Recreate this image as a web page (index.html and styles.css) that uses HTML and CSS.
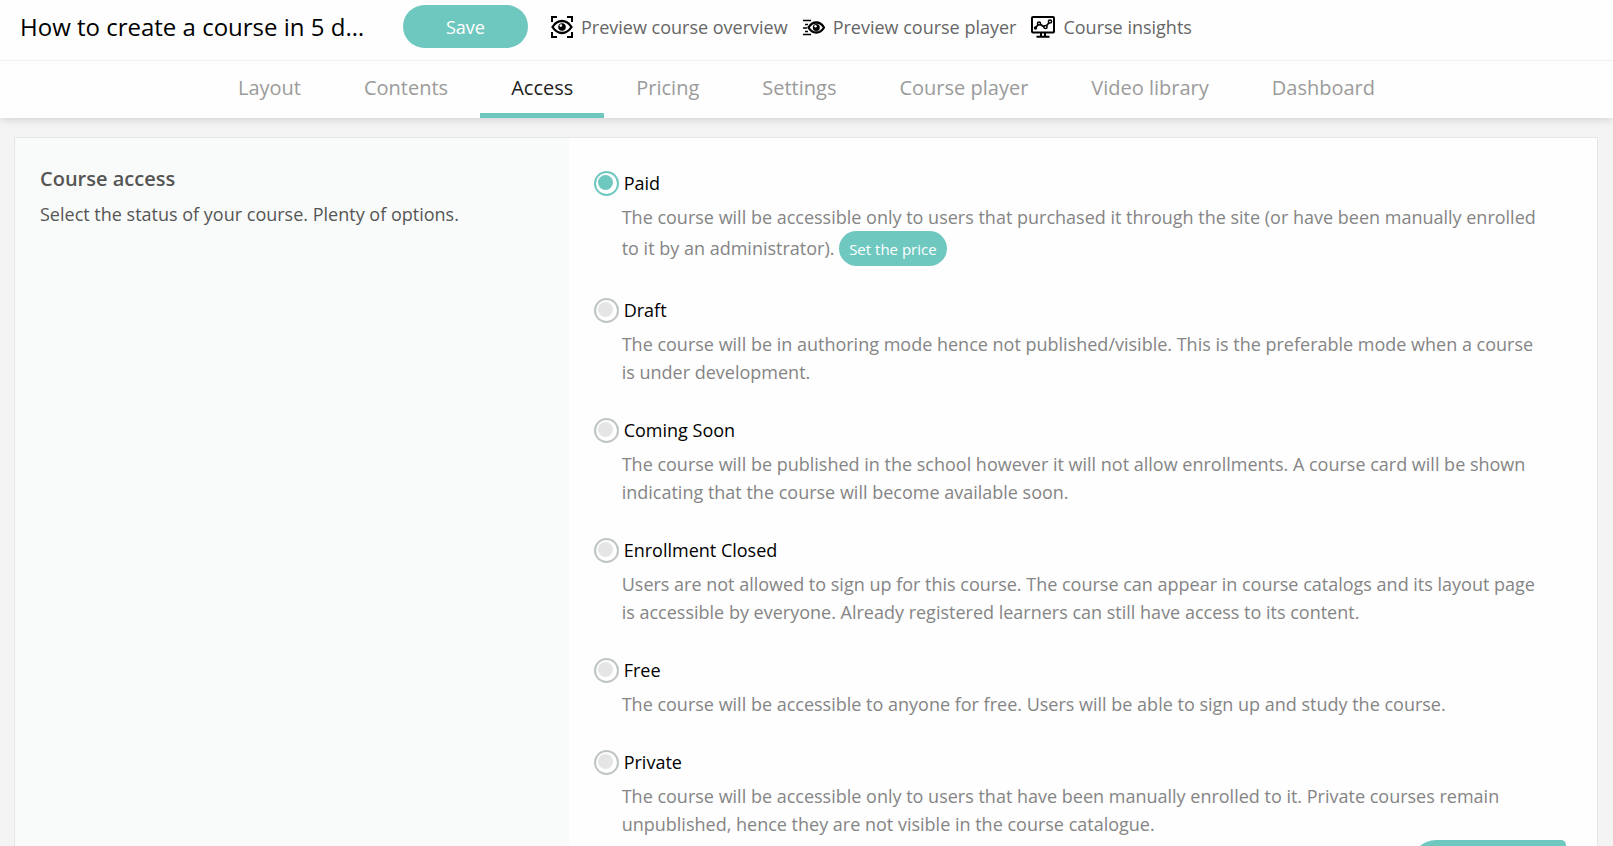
FILE: index.html
```html
<!DOCTYPE html>
<html lang="en">
<head>
    <meta charset="UTF-8">
    <meta name="viewport" content="width=device-width, initial-scale=1.0">
    <title>Course access</title>
    <link rel="stylesheet" href="styles.css">
</head>
<body>
    <header class="header">
        <div class="topbar">
            <h1 class="course-title">How to create a course in 5 days</h1>
            <button type="button" class="btn btn-save">Save</button>
            <div class="top-links">
                <a href="#" class="top-link">
                    <svg class="icon" width="22" height="22" viewBox="0 0 22 22" fill="none" stroke="#000" stroke-width="2">
                        <path d="M1 6V1h5M16 1h5v5M21 16v5h-5M6 21H1v-5"/>
                        <path d="M1.500 11C4 7 7.200 5 11 5s7 2 9.500 6c-2.500 4-5.700 6-9.500 6s-7-2-9.500-6z" stroke-width="2.300"/>
                        <circle cx="11" cy="11" r="3.800" fill="#000" stroke="none"/>
                        <circle cx="9.800" cy="9.600" r="1.300" fill="#fff" stroke="none"/>
                    </svg>
                    <span>Preview course overview</span>
                </a>
                <a href="#" class="top-link">
                    <svg class="icon" width="22" height="22" viewBox="0 0 22 22" fill="none" stroke="#000" stroke-width="2">
                        <path d="M0 4.500h8M2 8.500h3M0 12h4M2 15.500h3M0 18.500h8" stroke-width="1.500"/>
                        <path d="M5.500 11.500C7.500 8 10 6.500 13.300 6.500S19 8 21 11.500C19 15 16.600 16.500 13.300 16.500S7.500 15 5.500 11.500z" stroke-width="2.300"/>
                        <circle cx="13.300" cy="11.500" r="3.500" fill="#000" stroke="none"/>
                        <circle cx="12.500" cy="10.300" r="1.200" fill="#fff" stroke="none"/>
                    </svg>
                    <span>Preview course player</span>
                </a>
                <a href="#" class="top-link">
                    <svg class="icon" width="24" height="22" viewBox="0 0 24 22" fill="none" stroke="#000" stroke-width="2">
                        <rect x="1" y="1" width="22" height="15.500" rx="1"/>
                        <path d="M4 12.500l4-5 6 4 5-6" stroke-width="1.700"/>
                        <circle cx="4.500" cy="12" r="1.700" fill="#000" stroke="none"/>
                        <circle cx="8" cy="7.500" r="1.500" fill="#fff" stroke-width="1.500"/>
                        <circle cx="14.500" cy="11" r="1.600" fill="#fff" stroke-width="1.500"/>
                        <circle cx="19" cy="5.500" r="1.600" fill="#fff" stroke-width="1.500"/>
                        <path d="M10 17v3M14 17v3M5.500 20.800h13"/>
                    </svg>
                    <span>Course insights</span>
                </a>
            </div>
        </div>
        <nav class="tabs">
            <a href="#" class="tab">Layout</a>
            <a href="#" class="tab">Contents</a>
            <a href="#" class="tab active">Access</a>
            <a href="#" class="tab">Pricing</a>
            <a href="#" class="tab">Settings</a>
            <a href="#" class="tab">Course player</a>
            <a href="#" class="tab">Video library</a>
            <a href="#" class="tab">Dashboard</a>
        </nav>
    </header>

    <main class="card">
        <section class="card-info">
            <h2>Course access</h2>
            <p>Select the status of your course. Plenty of options.</p>
        </section>
        <form class="options">
            <div class="option">
                <input type="radio" name="access" id="paid" checked>
                <label for="paid">Paid</label>
                <p>The course will be accessible only to users that purchased it through the site (or have been manually enrolled to it by an administrator). <button type="button" class="btn btn-price">Set the price</button></p>
            </div>
            <div class="option">
                <input type="radio" name="access" id="draft">
                <label for="draft">Draft</label>
                <p>The course will be in authoring mode hence not published/visible. This is the preferable mode when a course is under development.</p>
            </div>
            <div class="option">
                <input type="radio" name="access" id="soon">
                <label for="soon">Coming Soon</label>
                <p>The course will be published in the school however it will not allow enrollments. A course card will be shown indicating that the course will become available soon.</p>
            </div>
            <div class="option">
                <input type="radio" name="access" id="closed">
                <label for="closed">Enrollment Closed</label>
                <p>Users are not allowed to sign up for this course. The course can appear in course catalogs and its layout page is accessible by everyone. Already registered learners can still have access to its content.</p>
            </div>
            <div class="option">
                <input type="radio" name="access" id="free">
                <label for="free">Free</label>
                <p>The course will be accessible to anyone for free. Users will be able to sign up and study the course.</p>
            </div>
            <div class="option">
                <input type="radio" name="access" id="private">
                <label for="private">Private</label>
                <p>The course will be accessible only to users that have been manually enrolled to it. Private courses remain unpublished, hence they are not visible in the course catalogue.</p>
            </div>
        </form>
    </main>

    <button type="button" class="help-btn" aria-label="Help"></button>
</body>
</html>
```
FILE: styles.css
```css
* {
    box-sizing: border-box;
}

body {
    margin: 0;
    height: 100vh;
    overflow: hidden;
    background: #f4f4f4;
    font-family: "Open Sans", "Noto Sans", sans-serif;
    font-size: 18px;
    color: #000;
}

h1, h2, p {
    margin: 0;
}

a {
    text-decoration: none;
}

.header {
    position: relative;
    background: #fefefe;
    box-shadow: 0 2px 8px rgba(0, 0, 0, 0.13);
}

.topbar {
    display: flex;
    align-items: center;
    height: 61px;
    padding: 0 20px 7px;
    border-bottom: 1px solid #efefef;
}

.course-title {
    width: 352px;
    margin-right: 31px;
    font-size: 24px;
    font-weight: 400;
    white-space: nowrap;
    overflow: hidden;
    text-overflow: ellipsis;
}

.btn {
    border: none;
    border-radius: 22px;
    background: #6fc8bf;
    color: #fff;
    font-family: inherit;
    cursor: pointer;
}

.btn-save {
    width: 125px;
    height: 43px;
    font-size: 18px;
}

.top-links {
    display: flex;
    gap: 15px;
    margin-left: 23px;
}

.top-link {
    display: flex;
    align-items: center;
    gap: 8px;
    color: #666;
    white-space: nowrap;
}

.icon {
    flex: none;
}

.tabs {
    display: flex;
    justify-content: center;
    gap: 1px;
    height: 57px;
}

.tab {
    padding: 2px 31px 0;
    border-bottom: 5px solid transparent;
    font-size: 20px;
    line-height: 50px;
    color: #9b9b9b;
}

.tab.active {
    border-bottom-color: #6fc8bf;
    color: #222;
}

.card {
    display: flex;
    margin: 19px 15px 0 14px;
    border: 1px solid #e5e7e7;
    background: #fefefe;
}

.card-info {
    width: 35%;
    padding: 26px 25px;
    background: #f9fbfa;
    color: #555;
}

.card-info h2 {
    font-size: 20px;
    font-weight: 600;
    line-height: 30px;
}

.card-info p {
    margin-top: 6px;
    line-height: 28px;
}

.options {
    flex: 1;
    padding: 33px 56px 40px 25px;
}

.option {
    display: grid;
    grid-template-columns: 25px 1fr;
    column-gap: 5px;
    margin-bottom: 32px;
}

.option input {
    appearance: none;
    width: 25px;
    height: 25px;
    margin: 0;
    border: 2px solid #bfc5c4;
    border-radius: 50%;
}

.option input::before {
    content: "";
    display: block;
    width: 15px;
    height: 15px;
    margin: 2px;
    border-radius: 50%;
    background: #e5e5e5;
}

.option input:checked {
    border-color: #6fc8bf;
}

.option input:checked::before {
    background: #6fc8bf;
}

.option label {
    line-height: 25px;
}

.option p {
    grid-column: 1 / 3;
    margin-top: 7px;
    padding-left: 28px;
    line-height: 28px;
    color: #858585;
}

.btn-price {
    height: 35px;
    padding: 0 10px;
    font-size: 15px;
}

.help-btn {
    position: fixed;
    right: 47px;
    bottom: -44px;
    width: 155px;
    height: 50px;
    border: none;
    border-radius: 25px 5px 5px 25px;
    background: #6fc8bf;
}
```
